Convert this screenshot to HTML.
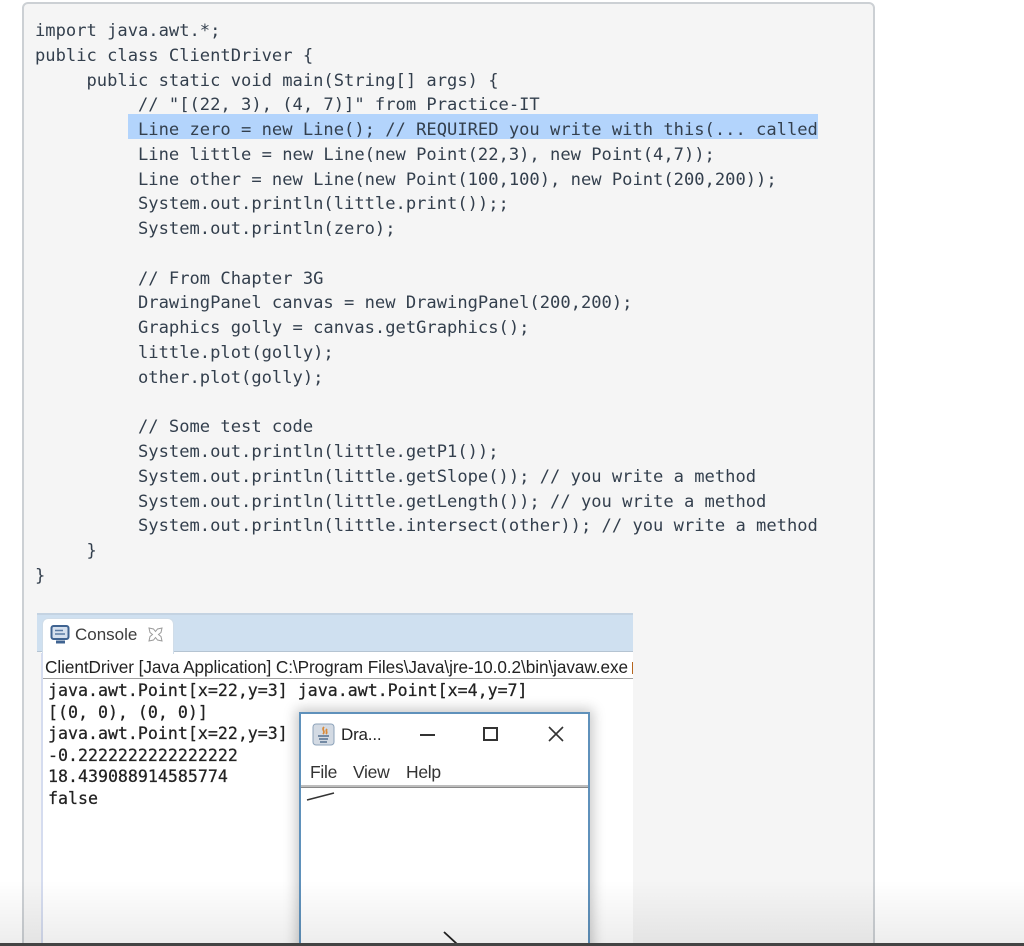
<!DOCTYPE html>
<html>
<head>
<meta charset="utf-8">
<style>
html,body{margin:0;padding:0;background:#fff;width:1024px;height:946px;overflow:hidden;}
#page{position:relative;width:1024px;height:946px;overflow:hidden;font-family:"Liberation Sans",sans-serif;background:#fff;}
.abs{position:absolute;}
#box{left:22px;top:2px;width:853px;height:960px;background:#f5f5f5;border:2px solid #ccd0d4;border-radius:6px;box-sizing:border-box;}
#hl{left:128px;top:114px;width:690px;height:25px;background:#b3d4fc;}
#code{left:35px;top:19px;margin:0;font:17.12px/24.77px "DejaVu Sans Mono","Liberation Mono",monospace;color:#333f4d;white-space:pre;}
#shot{left:37px;top:613px;width:596px;height:330px;overflow:hidden;filter:blur(.3px);}
#white{left:4px;top:30px;width:592px;height:300px;background:#fff;}
#tabbar{left:0;top:0;width:596px;height:39px;background:#cfe0f0;border-top:2px solid #c4d3e2;box-sizing:border-box;border-bottom:1px solid #b5c4d2;}
#tab{left:5px;top:5px;width:132px;height:36px;background:#fff;border-radius:6px 6px 0 0;border:1px solid #d0dde9;border-bottom:0;box-sizing:border-box;}
#tabt{left:38px;top:10px;font-size:17px;line-height:24px;color:#3d3d3d;}
#x{left:111px;top:14px;}
#title{left:8px;top:42px;font-size:17.2px;line-height:24px;color:#222;white-space:pre;letter-spacing:-.07px;}
#rule{left:6px;top:65px;width:590px;height:1px;background:#a0a0a0;}
#left{left:4px;top:40px;width:2px;height:290px;background:#d5dcef;}
#out{left:11px;top:67px;margin:0;font:16.6px/21.6px "DejaVu Sans Mono","Liberation Mono",monospace;color:#222;white-space:pre;-webkit-text-stroke:.25px #222;}
#win{left:262px;top:99px;width:291px;height:250px;background:#fff;border:2px solid #5f91bb;box-sizing:border-box;box-shadow:0 0 12px 3px rgba(0,0,0,.22);border-bottom:0;}
#dra{left:40px;top:10px;font-size:17px;line-height:22px;color:#222;letter-spacing:-.2px;}
.menu{top:47px;font-size:17.5px;line-height:22px;color:#333;letter-spacing:-.3px;}
#sep{left:0;top:71px;width:287px;height:2px;background:#bdbdbd;border-bottom:1px solid #888;}
#fade{left:0;top:880px;width:1024px;height:63px;background:linear-gradient(to bottom,rgba(0,0,0,0),rgba(0,0,0,.07));}
#bar{left:0;top:943px;width:1024px;height:3px;background:#444;}
</style>
</head>
<body>
<div id="page">
<div class="abs" id="box"></div>
<div class="abs" id="hl"></div>
<pre class="abs" id="code">import java.awt.*;
public class ClientDriver {
     public static void main(String[] args) {
          // "[(22, 3), (4, 7)]" from Practice-IT
          Line zero = new Line(); // REQUIRED you write with this(... called
          Line little = new Line(new Point(22,3), new Point(4,7));
          Line other = new Line(new Point(100,100), new Point(200,200));
          System.out.println(little.print());;
          System.out.println(zero);

          // From Chapter 3G
          DrawingPanel canvas = new DrawingPanel(200,200);
          Graphics golly = canvas.getGraphics();
          little.plot(golly);
          other.plot(golly);

          // Some test code
          System.out.println(little.getP1());
          System.out.println(little.getSlope()); // you write a method
          System.out.println(little.getLength()); // you write a method
          System.out.println(little.intersect(other)); // you write a method
     }
}</pre>
<div class="abs" id="shot">
  <div class="abs" id="white"></div>
  <div class="abs" id="tabbar"></div>
  <div class="abs" id="tab"></div>
  <svg class="abs" style="left:13px;top:11px" width="22" height="22" viewBox="0 0 22 22">
    <rect x="1.500" y="2" width="17" height="13" rx="2" fill="#d5e0ee" stroke="#3f6391" stroke-width="2"/>
    <path d="M5 6.500h8M5 10h10" stroke="#5a7ba3" stroke-width="1.500"/>
    <path d="M6 18h9" stroke="#3f6391" stroke-width="3"/>
  </svg>
  <div class="abs" id="tabt">Console</div>
  <svg class="abs" id="x" width="15" height="15" viewBox="0 0 15 15">
    <path d="M1 1l4.500 1 2 2.500 2-2.500 4.500-1-1 4.500-2.500 2 2.500 2 1 4.500-4.500-1-2-2.500-2 2.500-4.500 1 1-4.500 2.500-2-2.500-2z" fill="#fff" stroke="#9a9a9a" stroke-width="1"/>
  </svg>
  <div class="abs" id="title">ClientDriver [Java Application] C:\Program Files\Java\jre-10.0.2\bin\javaw.exe</div>
  <div class="abs" style="left:595px;top:49px;width:2px;height:12px;background:#b5651d"></div>
  <div class="abs" id="rule"></div>
  <div class="abs" id="left"></div>
  <pre class="abs" id="out">java.awt.Point[x=22,y=3] java.awt.Point[x=4,y=7]
[(0, 0), (0, 0)]
java.awt.Point[x=22,y=3]
-0.2222222222222222
18.439088914585774
false</pre>
  <div class="abs" id="win">
    <svg class="abs" style="left:11px;top:9px" width="24" height="24" viewBox="0 0 24 24">
      <rect x="1" y="1" width="21" height="21" rx="3" fill="#d3dae3" stroke="#8da3ba"/>
      <path d="M12 4c-3 3 2 4-1 7M15 6c-2 2 1 3-1 5" stroke="#d98a3a" stroke-width="1.800" fill="none"/>
      <path d="M6 13h11M7 16h9M8 19h7" stroke="#55708f" stroke-width="1.500"/>
    </svg>
    <div class="abs" id="dra">Dra...</div>
    <div class="abs" style="left:119px;top:20px;width:15px;height:1.500px;background:#333"></div>
    <div class="abs" style="left:182px;top:13px;width:15px;height:14px;border:2px solid #333;box-sizing:border-box"></div>
    <svg class="abs" style="left:247px;top:12px" width="16" height="16" viewBox="0 0 16 16"><path d="M1 1l14 14M15 1L1 15" stroke="#333" stroke-width="1.600"/></svg>
    <div class="abs menu" style="left:9px">File</div>
    <div class="abs menu" style="left:52px">View</div>
    <div class="abs menu" style="left:105px">Help</div>
    <div class="abs" id="sep"></div>
    <svg class="abs" style="left:0;top:74px" width="287" height="176" viewBox="0 0 287 176">
      <path d="M6 12L33 5" stroke="#333" stroke-width="1.500"/>
      <path d="M143 144L156 156" stroke="#222" stroke-width="1.800"/>
    </svg>
  </div>
</div>
<div class="abs" id="fade"></div>
<div class="abs" id="bar"></div>
</div>
</body>
</html>
